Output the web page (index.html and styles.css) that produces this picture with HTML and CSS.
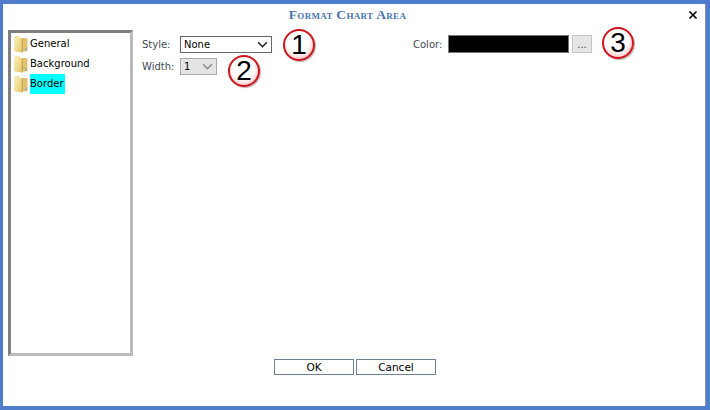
FILE: index.html
```html
<!DOCTYPE html>
<html lang="en">
<head>
    <meta charset="UTF-8">
    <meta name="viewport" content="width=device-width, initial-scale=1.0">
    <title>Format Chart Area</title>
    <link rel="stylesheet" href="styles.css">
</head>
<body>
    <svg class="defs" width="0" height="0">
        <defs>
            <linearGradient id="folderFill" x1="0" y1="0" x2="1" y2="1">
                <stop offset="0" stop-color="#fdf3b8"/>
                <stop offset="1" stop-color="#e6c76c"/>
            </linearGradient>
            <symbol id="folder" viewBox="0 0 14 17">
                <path d="M0.5 2 L1.5 0.5 L5 0.5 L6 2 L12.5 2 L13.5 3 L13.5 14.5 L12.5 15.5 L1.5 15.5 L0.5 14.5 Z" fill="#dfc272"/>
                <path d="M0.5 2 L4 0.5 L8 2.6 L8 16.5 L4 16 L0.5 14.5 Z" fill="url(#folderFill)"/>
                <path d="M8.2 2.6 L8.2 16.5" stroke="#c29c45" stroke-width="1"/>
                <path d="M11.5 12 L12.5 12 L12.5 14.5 L11.5 14.5 Z" fill="#5aa6d6"/>
            </symbol>
        </defs>
    </svg>

    <div class="dialog">
        <div class="title-bar">
            <span class="title">Format Chart Area</span>
            <svg class="close" width="10" height="10" viewBox="0 0 10 10">
                <path d="M1.5 1.5 L8.5 8.5 M8.5 1.5 L1.5 8.5" stroke="#000" stroke-width="1.7"/>
            </svg>
        </div>

        <div class="content">
            <div class="tree">
                <div class="tree-item">
                    <svg class="folder" width="14" height="17"><use href="#folder"/></svg>
                    <span class="tree-label">General</span>
                </div>
                <div class="tree-item">
                    <svg class="folder" width="14" height="17"><use href="#folder"/></svg>
                    <span class="tree-label">Background</span>
                </div>
                <div class="tree-item">
                    <svg class="folder" width="14" height="17"><use href="#folder"/></svg>
                    <span class="tree-label selected">Border</span>
                </div>
            </div>

            <div class="form">
                <div class="form-row">
                    <div class="field">
                        <label class="field-label">Style:</label>
                        <div class="select style-select">
                            <span>None</span>
                            <svg width="11" height="7" viewBox="0 0 12 8"><path d="M1 1.5 L6 6.5 L11 1.5" fill="none" stroke="#222" stroke-width="1.8"/></svg>
                        </div>
                    </div>
                    <div class="field color-field">
                        <label class="field-label">Color:</label>
                        <div class="swatch"></div>
                        <button type="button" class="dots">...</button>
                    </div>
                </div>
                <div class="form-row">
                    <div class="field">
                        <label class="field-label">Width:</label>
                        <div class="select width-select">
                            <span>1</span>
                            <svg width="11" height="7" viewBox="0 0 12 8"><path d="M1 1.5 L6 6.5 L11 1.5" fill="none" stroke="#8a8a8a" stroke-width="1.8"/></svg>
                        </div>
                    </div>
                </div>
            </div>
        </div>

        <div class="footer">
            <button type="button" class="action">OK</button>
            <button type="button" class="action">Cancel</button>
        </div>

        <!-- callouts sit on top of the screenshot -->
        <div class="callout callout-1">1</div>
        <div class="callout callout-2">2</div>
        <div class="callout callout-3">3</div>
    </div>
</body>
</html>
```

FILE: styles.css
```css
html, body {
    margin: 0;
    padding: 0;
}
body {
    width: 710px;
    height: 410px;
    overflow: hidden;
    background: white;
    font-family: "DejaVu Sans", Verdana, sans-serif;
    font-size: 10px;
    color: #000;
}
.defs {
    position: absolute;
}
.dialog {
    position: relative;
    box-sizing: border-box;
    width: 710px;
    height: 410px;
    border: 4px solid #4f7ccb;
    border-left-width: 3px;
    display: flex;
    flex-direction: column;
    background: white;
    box-shadow: inset -1px 0 0 #8a9099;
}
.title-bar {
    height: 26px;
    flex: none;
    display: flex;
    justify-content: center;
    align-items: center;
    position: relative;
}
.title {
    font-family: "Liberation Serif", serif;
    font-weight: bold;
    font-variant: small-caps;
    font-size: 13.5px;
    letter-spacing: 0.3px;
    color: #4a76ad;
    margin-top: -4px;
    margin-left: -14px;
}
.close {
    position: absolute;
    right: 8px;
    top: 6px;
}
.content {
    display: flex;
    height: 326px;
    flex: none;
    padding-left: 5px;
}
.tree {
    box-sizing: border-box;
    width: 125px;
    height: 326px;
    border: 3px solid;
    border-color: #808080 #bbbbbb #bbbbbb #808080;
    padding: 1px 0 0 3px;
}
.tree-item {
    display: flex;
    align-items: center;
    height: 20px;
}
.folder {
    flex: none;
    margin-right: 2px;
}
.tree-label {
    line-height: 20px;
    padding-right: 1px;
}
.selected {
    background: #00ffff;
}
.form {
    flex: 1;
    padding: 5px 0 0 9px;
}
.form-row {
    display: flex;
    align-items: center;
    height: 18px;
    margin-bottom: 4px;
}
.field {
    display: flex;
    align-items: center;
}
.field-label {
    color: #3f4a55;
    width: 38px;
}
.select {
    box-sizing: border-box;
    display: flex;
    justify-content: space-between;
    align-items: center;
    height: 17px;
    padding: 0 3px;
}
.style-select {
    width: 92px;
    border: 1px solid #666;
    background: white;
}
.width-select {
    width: 37px;
    border: 1px solid #aaa;
    background: #e4e4e4;
}
.color-field {
    margin-left: 141px;
}
.color-field .field-label {
    width: 35px;
}
.swatch {
    box-sizing: border-box;
    width: 121px;
    height: 18px;
    background: black;
    border: 1px solid #777;
}
.dots {
    box-sizing: border-box;
    width: 20px;
    height: 18px;
    margin-left: 3px;
    padding: 0;
    background: #e6e6e6;
    border: 1px solid #c8c8c8;
    color: #444;
    font-family: inherit;
    font-size: 10px;
}
.footer {
    display: flex;
    justify-content: center;
    gap: 2px;
    padding-top: 3px;
    padding-left: 1px;
}
.action {
    box-sizing: border-box;
    width: 80px;
    height: 16px;
    padding: 0;
    background: white;
    border: 1px solid #708090;
    color: #000;
    font-family: inherit;
    font-size: 10.5px;
    line-height: 14px;
}
.callout {
    position: absolute;
    box-sizing: border-box;
    width: 32px;
    height: 32px;
    border-radius: 50%;
    border: 2px solid #d0141c;
    background: radial-gradient(circle at 46% 40%, #fff 48%, #fdd8d8 70%, #ee6f6f 95%);
    box-shadow: 1px 1px 1px rgba(0,0,0,0.3);
    font-family: "Liberation Sans", Arial, sans-serif;
    font-size: 28px;
    line-height: 28px;
    text-align: center;
    color: #000;
}
.callout-1 {
    left: 280px;
    top: 25px;
}
.callout-2 {
    left: 225px;
    top: 51px;
}
.callout-3 {
    left: 599px;
    top: 23px;
}
```
